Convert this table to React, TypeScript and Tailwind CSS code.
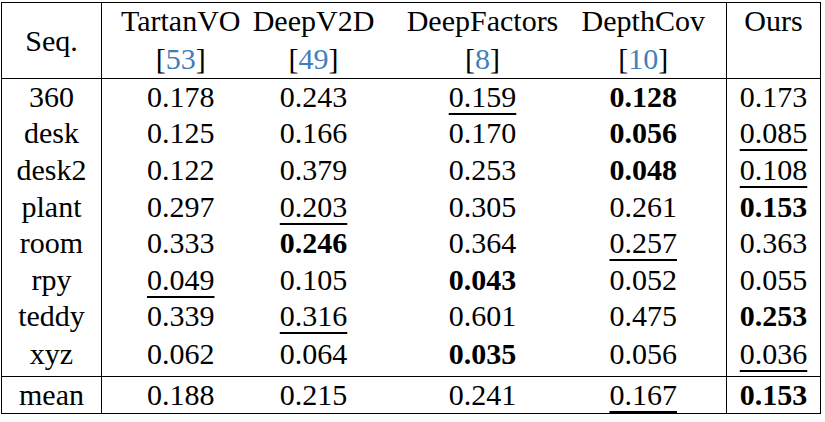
import React from "react";

type Cell = { v: string; s?: "b" | "u" };

const rows: { name: string; cells: Cell[] }[] = [
  { name: "360", cells: [{ v: "0.178" }, { v: "0.243" }, { v: "0.159", s: "u" }, { v: "0.128", s: "b" }, { v: "0.173" }] },
  { name: "desk", cells: [{ v: "0.125" }, { v: "0.166" }, { v: "0.170" }, { v: "0.056", s: "b" }, { v: "0.085", s: "u" }] },
  { name: "desk2", cells: [{ v: "0.122" }, { v: "0.379" }, { v: "0.253" }, { v: "0.048", s: "b" }, { v: "0.108", s: "u" }] },
  { name: "plant", cells: [{ v: "0.297" }, { v: "0.203", s: "u" }, { v: "0.305" }, { v: "0.261" }, { v: "0.153", s: "b" }] },
  { name: "room", cells: [{ v: "0.333" }, { v: "0.246", s: "b" }, { v: "0.364" }, { v: "0.257", s: "u" }, { v: "0.363" }] },
  { name: "rpy", cells: [{ v: "0.049", s: "u" }, { v: "0.105" }, { v: "0.043", s: "b" }, { v: "0.052" }, { v: "0.055" }] },
  { name: "teddy", cells: [{ v: "0.339" }, { v: "0.316", s: "u" }, { v: "0.601" }, { v: "0.475" }, { v: "0.253", s: "b" }] },
  { name: "xyz", cells: [{ v: "0.062" }, { v: "0.064" }, { v: "0.035", s: "b" }, { v: "0.056" }, { v: "0.036", s: "u" }] },
];

const mean: Cell[] = [{ v: "0.188" }, { v: "0.215" }, { v: "0.241" }, { v: "0.167", s: "u" }, { v: "0.153", s: "b" }];

// per-column padding to reproduce the LaTeX column centres
const pad = ["", "pl-[9px]", "pr-[4px]", "pl-[16px]", "pr-[8px]", ""];
const rule = ["border-r border-black", "", "", "", "border-r border-black", ""];

function Val({ c }: { c: Cell }) {
  if (c.s === "b") return <span className="font-bold">{c.v}</span>;
  if (c.s === "u")
    return <span className="underline decoration-[1.5px] underline-offset-[6px]">{c.v}</span>;
  return <span>{c.v}</span>;
}

const Cite = ({ n }: { n: string }) => (
  <span>
    [<span className="text-[#3f7fbd]">{n}</span>]
  </span>
);

export default function App() {
  return (
    <div className="w-[825px] h-[422px] bg-white pl-[1px] pt-[2px] text-black text-[30px] leading-none [font-family:'Liberation_Serif',serif]">
      <table className="table-fixed border-collapse border border-black text-center">
        <colgroup>
          <col className="w-[100px]" />
          <col className="w-[149px]" />
          <col className="w-[130px]" />
          <col className="w-[188px]" />
          <col className="w-[158px]" />
          <col className="w-[94px]" />
        </colgroup>
        <tbody>
          <tr className="h-[37px]">
            <td rowSpan={2} className={rule[0]}>Seq.</td>
            <td className={pad[1]}>TartanVO</td>
            <td className={pad[2]}>DeepV2D</td>
            <td className={pad[3]}>DeepFactors</td>
            <td className={rule[4] + " " + pad[4]}>DepthCov</td>
            <td>Ours</td>
          </tr>
          <tr className="h-[39px] border-b border-black">
            <td className={pad[1]}><Cite n="53" /></td>
            <td className={pad[2]}><Cite n="49" /></td>
            <td className={pad[3]}><Cite n="8" /></td>
            <td className={rule[4] + " " + pad[4]}><Cite n="10" /></td>
            <td></td>
          </tr>
          {rows.map((r, i) => {
            const last = i === rows.length - 1;
            return (
              <tr key={r.name} className={last ? "h-[42px] align-top" : "h-[36.6px]"}>
                <td className={rule[0] + (last ? " pt-[4px]" : "")}>{r.name}</td>
                {r.cells.map((c, j) => (
                  <td key={j} className={rule[j + 1] + " " + pad[j + 1] + (last ? " pt-[4px]" : "")}>
                    <Val c={c} />
                  </td>
                ))}
              </tr>
            );
          })}
          <tr className="h-[37px] border-t border-black">
            <td className={rule[0]}>mean</td>
            {mean.map((c, j) => (
              <td key={j} className={rule[j + 1] + " " + pad[j + 1]}>
                <Val c={c} />
              </td>
            ))}
          </tr>
        </tbody>
      </table>
    </div>
  );
}
